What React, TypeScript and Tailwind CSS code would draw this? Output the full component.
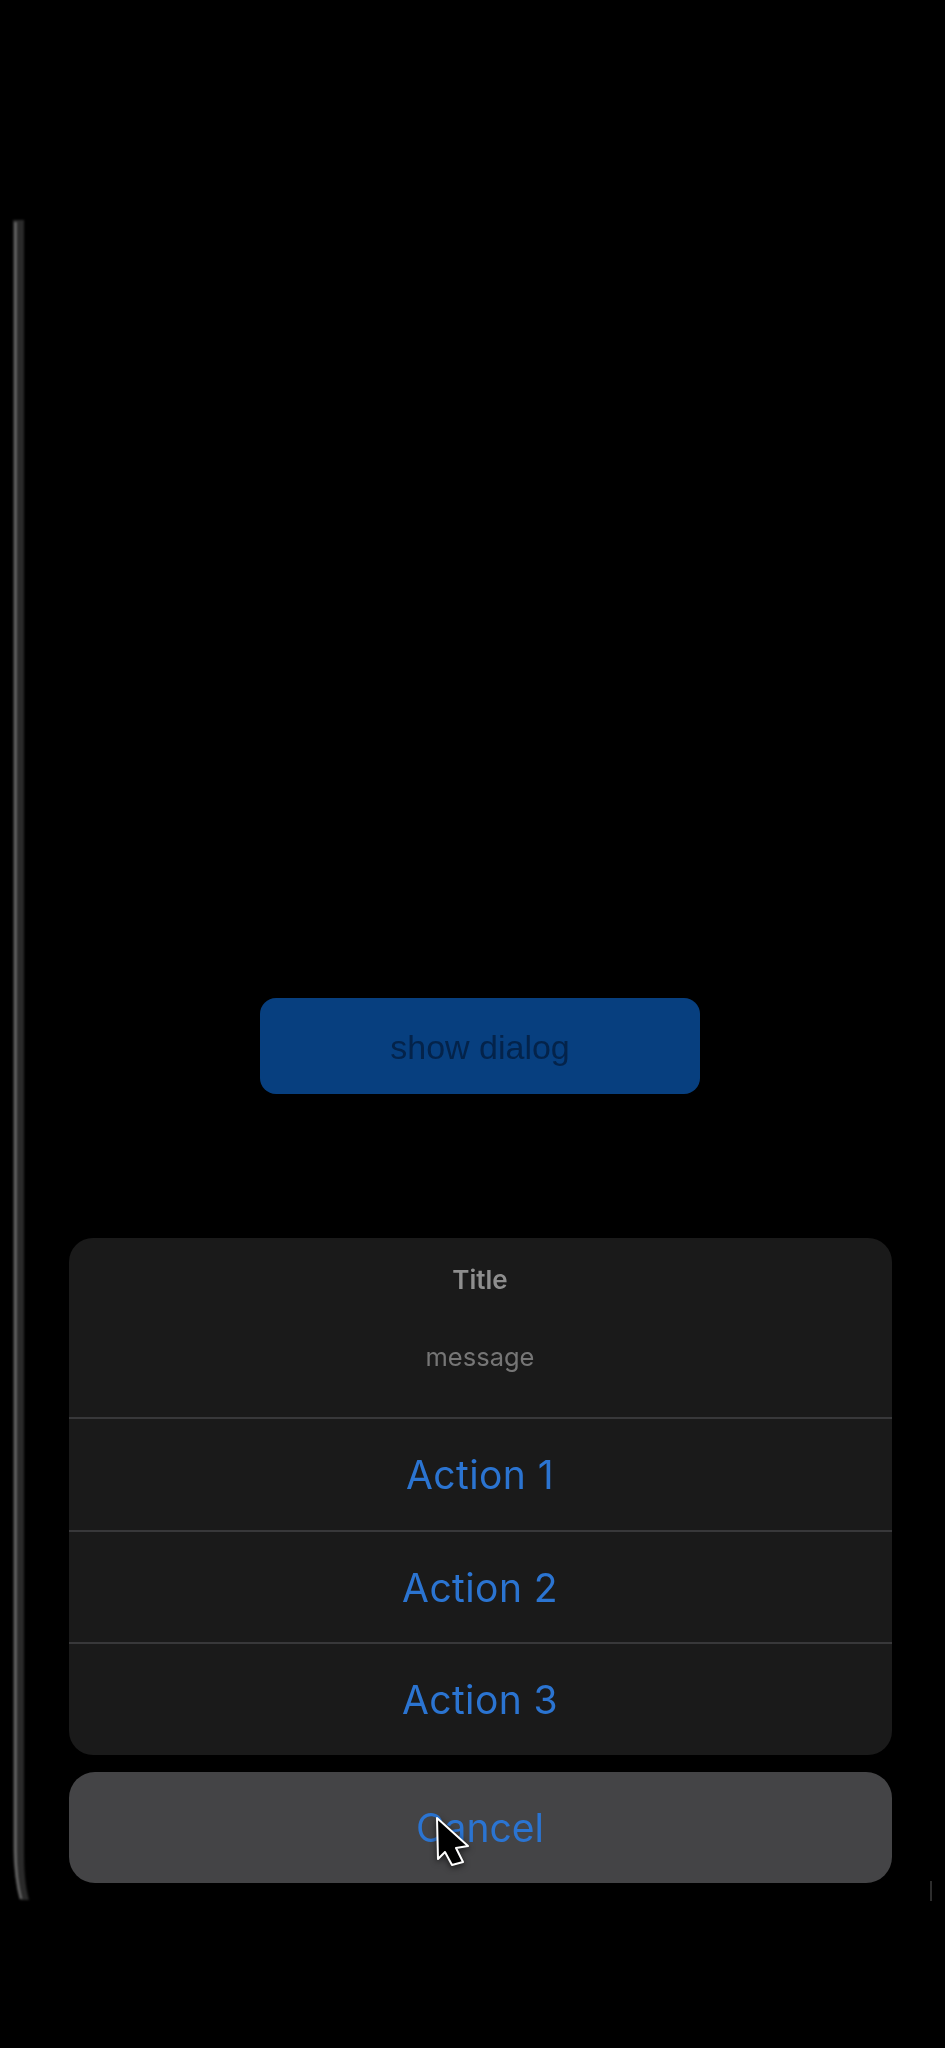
const FONT = "font-['Inter','Liberation_Sans',sans-serif]";

function ActionRow({ label }: { label: string }) {
    return (
        <div className="h-[112.5px] pt-[2px] flex items-center justify-center border-t-2 border-[#38383a] text-[39px] tracking-[0.4px] text-[#2b74d1] blur-[0.5px]">
            {label}
        </div>
    );
}

export default function App() {
    return (
        <div className={`relative w-[945px] h-[2048px] bg-black overflow-hidden flex flex-col items-center pt-[998px] pl-[15px] ${FONT}`}>
            {/* Edge of the device frame */}
            <svg className="absolute left-0 top-0 blur-[0.8px]" width="40" height="2048" viewBox="0 0 40 2048" fill="none">
                <path d="M13 220H24V1850C24 1870 25 1885 29 1900H21C16 1885 13 1865 13 1845Z" fill="#2a2a2a" />
                <path d="M15.5 222V1850C15.5 1868 17 1885 21 1899" stroke="#6a6a6a" strokeWidth="2.5" />
            </svg>
            <svg className="absolute left-[929px] top-[1880px] blur-[0.5px]" width="4" height="22" viewBox="0 0 4 22" fill="none">
                <path d="M2 1V21" stroke="#3c3c3c" strokeWidth="1.5" />
            </svg>

            <button className="w-[440px] h-[96px] shrink-0 rounded-[16px] bg-[#073f7f] flex items-center justify-center">
                <span className="pt-[2px] font-['Liberation_Sans',sans-serif] text-[34px] text-[#04234a] blur-[0.5px]">show dialog</span>
            </button>

            <div className="mt-[144px] w-[823px] shrink-0 rounded-[24px] bg-[#1a1a1a] overflow-hidden">
                <div className="h-[179px] flex flex-col items-center pt-[26px]">
                    <div className="text-[26px] leading-[32px] font-semibold text-[#8e8e8e] blur-[0.5px]">Title</div>
                    <div className="mt-[45px] text-[25.5px] leading-[32px] text-[#767676] blur-[0.5px]">message</div>
                </div>
                <ActionRow label="Action 1" />
                <ActionRow label="Action 2" />
                <ActionRow label="Action 3" />
            </div>

            <div className="relative mt-[17px] w-[823px] h-[111px] shrink-0 rounded-[26px] bg-[#444446] flex items-center justify-center text-[39px] text-[#2b74d1]">
                <span className="blur-[0.7px] pt-[2px]">Cancel</span>
                <svg className="absolute left-[361px] top-[39px] drop-shadow-[0_2px_3px_rgba(0,0,0,0.6)]" width="45" height="60" viewBox="0 0 45 60">
                    <path d="M7 7L38 35L26 37L33 51L22 54L15 41L8 48Z" fill="#000" stroke="#fff" strokeWidth="2" strokeLinejoin="round" />
                </svg>
            </div>
        </div>
    );
}
